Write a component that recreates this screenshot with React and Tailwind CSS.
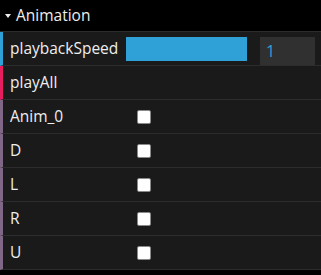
import React from "react";

function Row({ color, children }) {
  return (
    <div
      className="flex h-[34px] items-center border-b border-[#2c2c2c] bg-[#1a1a1a] pl-[7px] text-[#eeeeee]"
      style={{ borderLeft: `3px solid ${color}` }}
    >
      {children}
    </div>
  );
}

function CheckRow({ label }) {
  return (
    <Row color="#806787">
      <span className="w-[127px] shrink-0">{label}</span>
      <span className="box-border h-[14px] w-[14px] rounded-[2px] border border-[#8a8a8a] bg-white" />
    </Row>
  );
}

export default function App() {
  return (
    <div
      className="h-[275px] w-[321px] overflow-hidden bg-black text-[15.5px]"
      style={{ fontFamily: '"Open Sans", "Noto Sans", sans-serif' }}
    >
      <div className="flex h-[32px] items-center border-b border-[#2c2c2c] bg-black pl-[5px] text-[#eeeeee]">
        <svg width="6" height="4" viewBox="0 0 6 4" className="mr-[5px]">
          <path d="M0 0 L6 0 L3 4 Z" fill="#eeeeee" />
        </svg>
        <span>Animation</span>
      </div>
      <Row color="#2fa1d6">
        <span className="w-[116px] shrink-0">playbackSpeed</span>
        <div className="h-[24px] w-[121px] bg-[#2fa1d6]" />
        <div className="ml-[13px] flex h-[28px] w-[55px] items-center self-end bg-[#303030] pl-[6px] text-[16px] text-[#2fa1d6]">
          1
        </div>
      </Row>
      <Row color="#e61d5f">
        <span>playAll</span>
      </Row>
      <CheckRow label="Anim_0" />
      <CheckRow label="D" />
      <CheckRow label="L" />
      <CheckRow label="R" />
      <CheckRow label="U" />
    </div>
  );
}
